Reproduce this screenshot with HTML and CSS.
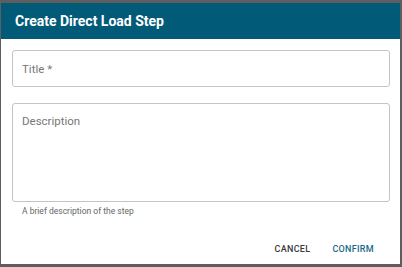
FILE: index.html
```html
<!DOCTYPE html>
<html>
	<head>
		<meta charset="UTF-8">
		<title>Create Direct Load Step</title>
		<link rel="stylesheet" href="styles.css">
	</head>
	<body>
		<div class="dialog">
			<div class="dialog-head">Create Direct Load Step</div>
			<div class="dialog-body">
				<div class="field field-title">
					<span class="label">Title *</span>
				</div>
				<div class="field field-desc">
					<span class="label">Description</span>
				</div>
				<div class="hint">A brief description of the step</div>
			</div>
			<div class="dialog-actions">
				<button class="btn btn-cancel">CANCEL</button>
				<button class="btn btn-confirm">CONFIRM</button>
			</div>
		</div>
	</body>
</html>
```

FILE: styles.css
```css
* {
	margin: 0;
	padding: 0;
	box-sizing: border-box;
}

body {
	background: #5e5e5e;
	font-family: Roboto, "Liberation Sans", sans-serif;
	padding: 3px 2px 3px 1px;
}

.dialog {
	width: 399px;
	height: 261px;
	background: white;
	display: flex;
	flex-direction: column;
}

.dialog-head {
	height: 36px;
	background: #015a78;
	color: white;
	font-size: 14px;
	font-weight: bold;
	padding-left: 14px;
	line-height: 36px;
}

.dialog-body {
	padding: 11px 10px 0 11px;
	flex: 1;
}

.field {
	border: 1px solid #c4c4c4;
	border-radius: 3px;
	padding-left: 9px;
}

.field-title {
	height: 37px;
	line-height: 34px;
}

.field-desc {
	height: 99px;
	margin-top: 16px;
	padding-top: 6px;
}

.label {
	font-size: 11.5px;
	color: #777;
}

.hint {
	font-size: 8.5px;
	color: #666;
	padding: 4px 0 0 10px;
}

.dialog-actions {
	display: flex;
	justify-content: flex-end;
	gap: 22px;
	padding: 0 26px 10px 0;
}

.btn {
	background: none;
	border: none;
	font-family: Roboto, "Liberation Sans", sans-serif;
	font-size: 9px;
	font-weight: 500;
	letter-spacing: 0.3px;
}

.btn-cancel {
	color: #3a3a3a;
}

.btn-confirm {
	color: #1a6a8a;
}
```
